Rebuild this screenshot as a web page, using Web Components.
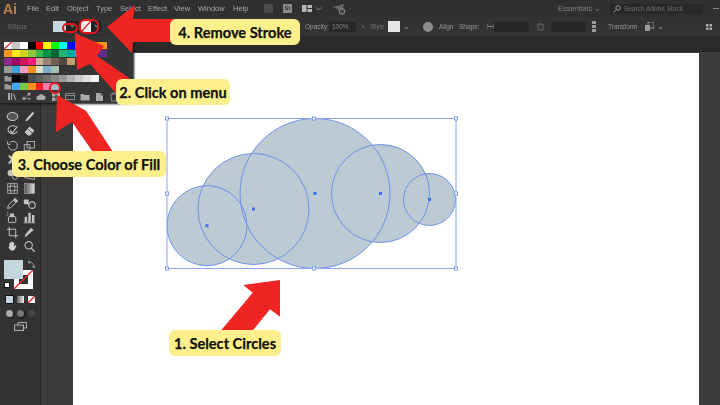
<!DOCTYPE html>
<html lang="en">
<head>
<meta charset="utf-8">
<title>Illustrator tutorial</title>
<style>
  html, body { margin: 0; height: 100%; background: #3a3a3a; overflow: hidden; }
</style>
</head>
<body>
<ai-app></ai-app>
<script>
const ICONS = {
  ellipse: '<ellipse cx="8" cy="8" rx="6.5" ry="5" fill="#555" stroke="#c4c4c4" stroke-width="1.3"/>',
  brush: '<path d="M3 14l3-1 8-9-2-2-8 9z" fill="#c4c4c4"/>',
  blob: '<path d="M12 3a6 5 0 1 0 2 6" fill="none" stroke="#c4c4c4" stroke-width="1.3"/><path d="M5 8l3 3 6-8" fill="none" stroke="#c4c4c4" stroke-width="1.4"/>',
  eraser: '<path d="M2 10l6-7 6 5-5 6H6z" fill="#c4c4c4"/><path d="M6 6l5 5" stroke="#444"/>',
  rotate: '<path d="M3 9a5.500 5.500 0 1 0 2-5M2 3v3.500h3.500" fill="none" stroke="#c4c4c4" stroke-width="1.2"/>',
  scale: '<rect x="1.500" y="7" width="7" height="7" fill="none" stroke="#c4c4c4"/><rect x="5" y="3" width="9" height="8" fill="none" stroke="#c4c4c4"/>',
  width: '<path d="M2 3l4 5-4 5h4l2-3 2 3h4l-4-5 4-5h-4L8 6 6 3z" fill="#c4c4c4"/>',
  free: '<rect x="3" y="3" width="10" height="10" fill="none" stroke="#c4c4c4" stroke-dasharray="2 1"/>',
  shape: '<circle cx="6" cy="6" r="4" fill="#c4c4c4"/><circle cx="11" cy="11" r="3" fill="none" stroke="#c4c4c4"/>',
  persp: '<path d="M2 4l12-2v12L2 12z" fill="none" stroke="#c4c4c4"/>',
  mesh: '<path d="M2 2h12v12H2zM2 6q6-2 12 0M2 10q6 2 12 0M6 2q-2 6 0 12M10 2q2 6 0 12" fill="none" stroke="#c4c4c4" stroke-width=".9"/>',
  gradient: '<rect x="2" y="2" width="12" height="12" fill="url(#g)" stroke="#c4c4c4" stroke-width=".6"/><linearGradient id="g"><stop stop-color="#555"/><stop offset="1" stop-color="#ddd"/></linearGradient>',
  dropper: '<path d="M2 14l1-4 6-6 3 3-6 6z" fill="none" stroke="#c4c4c4" stroke-width="1.2"/><path d="M9 3l2-2 4 4-2 2z" fill="#c4c4c4"/>',
  blend: '<rect x="1" y="3" width="6" height="6" rx="1" fill="#c4c4c4"/><circle cx="11" cy="10" r="4" fill="none" stroke="#c4c4c4" stroke-width="1.3"/><path d="M6 8l3 2" stroke="#c4c4c4"/>',
  spray: '<rect x="3" y="7" width="9" height="7" rx="1" fill="none" stroke="#c4c4c4" stroke-width="1.2"/><rect x="5" y="3" width="5" height="4" fill="#c4c4c4"/><path d="M1 2h2M1 5h2" stroke="#c4c4c4"/>',
  graph: '<path d="M2 14V7h3v7zM6.500 14V2h3v12zM11 14V5h3v9z" fill="#c4c4c4"/><path d="M1 14.500h14" stroke="#c4c4c4"/>',
  artboard: '<path d="M4 1v11h11M1 4h11v11" fill="none" stroke="#c4c4c4" stroke-width="1.200"/>',
  slice: '<path d="M2 14l1-4 7-8 3 3-8 7z" fill="#c4c4c4"/>',
  hand: '<path d="M4 8V4h1.500v3V2.500H7V7 2H8.500v5-4H10v5l1.500-2 1.500 1-3 6H6L3 9.500z" fill="#d0d0d0"/>',
  zoom: '<circle cx="7" cy="6.500" r="4.500" fill="none" stroke="#c4c4c4" stroke-width="1.300"/><path d="M10 10l4.500 4.500" stroke="#c4c4c4" stroke-width="1.500"/>'
};

// footer buttons of the swatches panel
const FOOT = [
  '<path d="M1 1v7h2V1zM4 1v7h1V1zM6 2l2 6 1-.5-2-6z" fill="#aaa"/>',
  '<circle cx="2" cy="6.500" r="1.500" fill="#aaa"/><circle cx="7" cy="2" r="1.500" fill="#aaa"/><circle cx="7.500" cy="7" r="1" fill="#aaa"/><path d="M2 6.500L7 2M2 6.500h5" stroke="#aaa" stroke-width=".6"/>',
  '<path d="M2.500 8a2 2 0 0 1-.3-4A3 3 0 0 1 7.500 3.500 2.300 2.300 0 0 1 8 8z" fill="#aaa"/>',
  '<path d="M1 1h3.500v3.500H1zM5.500 1H9v3.500H5.500zM1 5.500h3.500V9H1zM5.500 5.500H9V9H5.500z" fill="#aaa"/>',
  '<path d="M.5 1.500h9v6h-9zM.5 3.500h9" fill="none" stroke="#888"/>',
  '<path d="M.5 2h3l1 1h5v5.500h-9z" fill="#aaa"/>',
  '<path d="M2 1h5l2 2v6H2z" fill="#aaa"/><path d="M7 1v2h2" fill="none" stroke="#444"/>',
  '<path d="M1 2h8M3.500 2V1h3v1M2 3l.6 6h4.800L8 3" fill="none" stroke="#888"/>'
];

class AiMenubar extends HTMLElement {
  constructor() {
    super();
    this.attachShadow({ mode: 'open' });
  }

  connectedCallback() {
    const items = [['File', 19], ['Edit', 21], ['Object', 29], ['Type', 24], ['Select', 28], ['Effect', 26], ['View', 24], ['Window', 35], ['Help', 25]];
    this.shadowRoot.innerHTML = `
      <style>
        :host { display: flex; align-items: center; height: 17px; background: #303030; color: #a6a6a6; font: 7.500px "Liberation Sans", sans-serif; filter: blur(.35px); }
        .logo { width: 27px; padding-left: 3px; box-sizing: border-box; color: #c0824a; font: 700 14px "Liberation Sans", sans-serif; }
        nav { display: flex; width: 237px; }
        .icons { display: flex; align-items: center; gap: 10px; width: 294px; }
        .box { width: 9px; height: 9px; background: #4a4a4a; }
        .st { background: #8b8b8b; color: #333; font: 700 5.500px "Liberation Sans", sans-serif; text-align: center; line-height: 9px; }
        .ess { width: 52px; color: #808080; }
        .search { display: flex; align-items: center; gap: 3px; width: 93px; height: 10px; background: #282828; color: #707070; font-size: 6.500px; padding-left: 3px; box-sizing: border-box; }
        .dash { width: 6px; height: 1px; margin-left: 10px; background: #888; }
        svg { display: block; }
      </style>
      <span class="logo">Ai</span>
      <nav>${items.map(i => `<span style="width:${i[1]}px">${i[0]}</span>`).join('')}</nav>
      <div class="icons">
        <span class="box"></span><span class="box st">St</span>
        <svg width="20" height="8" viewBox="0 0 20 8"><path d="M0 0h4.500v7H0zM5.500 0H10v3H5.500zM5.500 4H10v3H5.500z" fill="#b5b5b5"/><path d="M14 2.500l2.500 2.500L19 2.500" fill="none" stroke="#999"/></svg>
        <svg width="13" height="12" viewBox="0 0 13 12" style="margin-left:1px"><path d="M0 4l11-3-2 8z" fill="#666"/><circle cx="9" cy="8.500" r="2.800" fill="#444" stroke="#999"/></svg>
      </div>
      <span class="ess">Essentials ⌄</span>
      <span class="search">
        <svg width="8" height="8" viewBox="0 0 8 8"><circle cx="5" cy="3" r="2.200" fill="none" stroke="#999"/><path d="M3.500 4.500L.5 7.500" stroke="#999"/></svg>
        Search Adobe Stock
      </span>
      <span class="dash"></span>
    `;
  }
}

class AiControlbar extends HTMLElement {
  constructor() {
    super();
    this.attachShadow({ mode: 'open' });
  }

  connectedCallback() {
    this.shadowRoot.innerHTML = `
      <style>
        :host { display: flex; align-items: center; height: 19px; background: #333; color: #969696; font: 6.500px "Liberation Sans", sans-serif; filter: blur(.3px); }
        .name { width: 53px; padding-left: 8px; box-sizing: border-box; color: #6a6a6a; }
        .fill { width: 13px; height: 11px; background: #c8d6de; }
        .drop { width: 13px; height: 11px; background: #222; color: #bbb; text-align: center; line-height: 8px; font-size: 8px; }
        .stroke { width: 10px; height: 11px; margin-left: 2px; background: #f2f2f2; }
        .gap { flex: none; }
        .input { height: 10px; background: #272727; color: #888; line-height: 10px; padding-left: 3px; box-sizing: border-box; }
        .swatch { width: 12px; height: 11px; background: #e6e6e6; }
        .globe { width: 10px; height: 10px; border-radius: 50%; background: #8d8d8d; }
        .chev { box-sizing: border-box; font-size: 8px; }
        svg { display: block; flex: none; }
      </style>
      <span class="name">Ellipse</span>
      <span class="fill"></span><span class="drop">⌄</span>
      <span class="stroke"><svg width="10" height="11" viewBox="0 0 10 11"><path d="M0 11L10 0" stroke="#e8262a" stroke-width="1.500"/></svg></span><span class="drop" style="width:10px">⌄</span>
      <span class="gap" style="width:204px"></span>
      <span style="width:24px">Opacity:</span>
      <span class="input" style="width:27px">100%</span>
      <span style="width:14px;text-align:center">›</span>
      <span style="width:18px;color:#707070">Style:</span>
      <span class="swatch"></span><span class="chev" style="width:23px;padding-left:3px">⌄</span>
      <span class="globe"></span>
      <span class="gap" style="width:6px"></span>
      <span style="width:20px">Align</span>
      <span style="width:28px">Shape:</span>
      <svg width="7" height="5" viewBox="0 0 7 5" style="margin-right:0"><path d="M0 0v5M7 0v5M1 2.500h5" stroke="#888"/></svg>
      <span class="input" style="width:35px"></span>
      <svg width="7" height="8" viewBox="0 0 7 8" style="margin:0 7.500px"><path d="M1 1h5v6H1z" fill="none" stroke="#666"/></svg>
      <span class="input" style="width:35px"></span>
      <svg width="4" height="11" viewBox="0 0 4 11" style="margin:0 12px 0 6px"><path d="M0 0h4v3H0zM0 4h4v3H0zM0 8h4v3H0z" fill="#999"/></svg>
      <span style="width:37px">Transform</span>
      <svg width="9" height="9" viewBox="0 0 9 9"><path d="M3 0h6v6H3z" fill="none" stroke="#999"/><path d="M0 3h5v6H0z" fill="#999"/></svg>
      <span class="chev" style="width:52px;padding-left:3px">⌄</span>
      <svg width="6" height="6" viewBox="0 0 6 6"><path d="M0 0h2.500v2.500H0zM3.500 0H6v2.500H3.500zM0 3.500h2.500V6H0zM3.500 3.500H6V6H3.500z" fill="#aaa"/></svg>
    `;
  }
}

class AiToolbar extends HTMLElement {
  constructor() {
    super();
    this.attachShadow({ mode: 'open' });
  }

  connectedCallback() {
    const rows = [
      ['ellipse', 'brush'], ['blob', 'eraser'], ['rotate', 'scale'], ['width', 'free'],
      ['shape', 'persp'], ['mesh', 'gradient'], ['dropper', 'blend'], ['spray', 'graph'],
      ['artboard', 'slice'], ['hand', 'zoom']
    ];
    const tools = rows.flat().map(n =>
      `<svg width="13" height="13" viewBox="0 0 16 16">${ICONS[n]}</svg>`).join('');
    this.shadowRoot.innerHTML = `
      <style>
        :host { display: flex; flex-direction: column; align-items: stretch; width: 41px; box-sizing: border-box; padding-top: 57.500px; background: #333; border-right: 1px solid #242424; filter: blur(.3px); }
        .tools { display: grid; grid-template-columns: 13px 13px; grid-auto-rows: 13px; justify-content: center; column-gap: 4px; row-gap: 1.500px; padding-left: 1px; }
        .colors { position: relative; height: 32px; margin-top: 7px; }
        .fill { position: absolute; left: 4px; top: 0; width: 19px; height: 19px; background: #c5d6df; z-index: 1; }
        .stroke { position: absolute; left: 14px; top: 10px; }
        .swap { position: absolute; left: 27px; top: 1px; }
        .mini { position: absolute; left: 4px; top: 22px; width: 4px; height: 4px; background: #fff; border: 1px solid #111; }
        .row { display: flex; justify-content: center; gap: 4px; }
        .mode { width: 7px; height: 7px; }
        .dm { width: 7px; height: 7px; border-radius: 50%; background: #aaa; box-shadow: 1px 1px 0 1px #222; }
        svg { display: block; }
      </style>
      <div class="tools">${tools}</div>
      <div class="colors">
        <div class="fill"></div>
        <svg class="stroke" width="19" height="19" viewBox="0 0 19 19"><path fill-rule="evenodd" d="M0 0h19v19H0zM5 5v9h9V5z" fill="#fff"/><path d="M0 19L19 0" stroke="#e8262a" stroke-width="1.300"/></svg>
        <svg class="swap" width="8" height="8" viewBox="0 0 8 8"><path d="M1 1h3l3 3v3M5 5l2 2 1-2M3 0L1 1l2 2" fill="none" stroke="#999"/></svg>
        <div class="mini"></div>
      </div>
      <div class="row" style="margin-top:3.500px">
        <span class="mode" style="background:#c5d6df;outline:1px solid #111"></span>
        <span class="mode" style="background:linear-gradient(90deg,#666,#eee)"></span>
        <svg class="mode" viewBox="0 0 7 7"><path d="M0 0h7v7H0z" fill="#fff"/><path d="M0 7L7 0" stroke="#e8262a" stroke-width="1.500"/></svg>
      </div>
      <div class="row" style="margin-top:7px">
        <span class="dm"></span><span class="dm" style="background:#777"></span><span class="dm" style="background:#444;box-shadow:none"></span>
      </div>
      <div class="row" style="margin-top:5px">
        <svg width="13" height="9" viewBox="0 0 13 9"><path d="M4 3V.5h8.500v5.500H9.500" fill="none" stroke="#aaa"/><rect x=".5" y="3" width="9" height="5.500" fill="#3a3a3a" stroke="#aaa"/></svg>
      </div>
    `;
  }
}

class AiSwatches extends HTMLElement {
  constructor() {
    super();
    this.attachShadow({ mode: 'open' });
  }

  connectedCallback() {
    const rows = [
      ['none', '#c4c4c4', '#fff', '#000', '#f00', '#ff0', '#0f0', '#0ff', '#00f', '#f0f', '#e33', '#e80', '#f7931e', ''],
      ['#f7931e', '#ffe81f', '#cfd31f', '#8cc63f', '#39b54a', '#009245', '#006837', '#22b573', '#00a99d', '#29abe2', '#0071bc', '#2e3192', '#662d91', ''],
      ['#93278f', '#9e005d', '#d4145a', '#ed1e79', '#c7b299', '#998675', '#736357', '#534741', '#c69c6d', '', '', '', '', ''],
      ['#999', '#3fa0dc', '#f49ac1', '#f7941d', '#d9e4c8', '#7fa9c9', '#a3c0b0', '', '', '', '', '', '', '']
    ];
    const cell = c => c === 'none'
      ? '<svg width="8" height="7" viewBox="0 0 8 7"><rect width="8" height="7" fill="#fff"/><path d="M0 7L8 0" stroke="#e8262a" stroke-width="1.300"/></svg>'
      : `<i style="background:${c || 'transparent'}"></i>`;
    const grays = ['#000', '#1c1c1c', '#4d4d4d', '#5e5e5e', '#707070', '#858585', '#999', '#b3b3b3', '#ccc', '#e0e0e0', '#f5f5f5'];
    const brights = ['#3fa9f5', '#7ac943', '#f7931e', '#ff1d25', '#ff7bac', '#a9b8c2'];
    const folder = '<svg width="8" height="7" viewBox="0 0 8 7"><path d="M.5 1h3l1 1h3v4.500H.5z" fill="#999"/></svg>';
    this.shadowRoot.innerHTML = `
      <style>
        :host { position: absolute; left: 0; top: 36px; z-index: 2; width: 133px; height: 67px; box-sizing: border-box; padding: 6px 0 0 4px; background: #353535; box-shadow: 1px 1px 2px #111; filter: blur(.3px); }
        .grid { display: flex; flex-direction: column; gap: 1px; }
        .row { display: flex; }
        .row > * { display: block; flex: none; width: 7.900px; height: 7px; }
        .row.spaced { margin-top: 1px; }
        .foot { display: flex; gap: 4.500px; margin-top: 2px; padding-left: 3px; }
        .foot svg { display: block; width: 10px; height: 10px; }
      </style>
      <div class="grid">
        ${rows.map(r => `<div class="row">${r.map(cell).join('')}</div>`).join('')}
        <div class="row spaced">${folder}${grays.map(cell).join('')}</div>
        <div class="row">${folder}${brights.map(cell).join('')}</div>
      </div>
      <div class="foot">${FOOT.map(p => `<svg viewBox="0 0 10 10">${p}</svg>`).join('')}</div>
    `;
  }
}

class AiArtboard extends HTMLElement {
  constructor() {
    super();
    this.attachShadow({ mode: 'open' });
  }

  connectedCallback() {
    const circles = [[315, 193.5, 75], [253.5, 209, 55.500], [207, 225.700, 40], [380.500, 193.500, 49], [429.500, 199.500, 26]];
    const handles = [[167, 118.500], [314, 118.500], [456, 118.500], [167, 193.500], [456, 193.500], [167, 268.500], [314, 268.500], [456, 268.500]];
    this.shadowRoot.innerHTML = `
      <style>
        :host { display: block; flex: 1; background: #fff; }
        svg { display: block; width: 100%; height: 100%; }
      </style>
      <svg viewBox="73 53 626 352">
        ${circles.map(c => `<circle cx="${c[0]}" cy="${c[1]}" r="${c[2]}" fill="#bccad3"/>`).join('')}
        <g fill="none" stroke="#6f93e6">
          ${circles.map(c => `<circle cx="${c[0]}" cy="${c[1]}" r="${c[2]}"/>`).join('')}
          <rect x="167" y="118.500" width="289" height="150" stroke="#8aa6ec"/>
        </g>
        ${handles.map(h => `<rect x="${h[0] - 1.5}" y="${h[1] - 1.5}" width="3" height="3" fill="#fff" stroke="#7f9fea"/>`).join('')}
        ${circles.map(c => `<rect x="${c[0] - 1.500}" y="${c[1] - 1.500}" width="3" height="3" fill="#3f6ff0"/>`).join('')}
      </svg>
    `;
  }
}

class CallOut extends HTMLElement {
  constructor() {
    super();
    this.attachShadow({ mode: 'open' });
  }

  connectedCallback() {
    this.shadowRoot.innerHTML = `
      <style>
        :host { position: absolute; z-index: 4; display: flex; align-items: center; justify-content: center; height: 26px; border-radius: 6px; background: #fdf08c; color: #121212; font: 700 14.600px Lato, sans-serif; -webkit-text-stroke: .25px #121212; white-space: nowrap; }
      </style>
      <slot></slot>
    `;
  }
}

class AiApp extends HTMLElement {
  constructor() {
    super();
    this.attachShadow({ mode: 'open' });
  }

  connectedCallback() {
    this.shadowRoot.innerHTML = `
      <style>
        :host { display: flex; flex-direction: column; position: relative; width: 720px; height: 405px; overflow: hidden; background: #3a3a3a; }
        .tabs { height: 16px; background: #2a2a2a; border-bottom: 1px solid #242424; box-sizing: border-box; }
        .work { flex: 1; display: flex; min-height: 0; }
        .canvas { flex: 1; display: flex; padding: 1px 21px 0 32px; background: #3b3b3b; }
        .marks { position: absolute; inset: 0; z-index: 3; pointer-events: none; }
        .ring { position: absolute; z-index: 3; box-sizing: border-box; border: 2px solid #e8141c; }
        call-out[n="1"] { left: 169px; top: 330px; width: 112px; }
        call-out[n="2"] { left: 116px; top: 79px; width: 114px; }
        call-out[n="3"] { left: 12px; top: 151px; width: 154px; }
        call-out[n="4"] { left: 170px; top: 19px; width: 130px; }
      </style>
      <ai-menubar></ai-menubar>
      <ai-controlbar></ai-controlbar>
      <div class="tabs"></div>
      <div class="work">
        <ai-toolbar></ai-toolbar>
        <div class="canvas"><ai-artboard></ai-artboard></div>
      </div>
      <ai-swatches></ai-swatches>
      <svg class="marks" viewBox="0 0 720 405" fill="#ef2523">
        <path d="M280 280L243.300 285L252.700 292.700L218 334H250L270 309.300L280 316.700Z"/>
        <path d="M57 95L86 110.700L115 155H95L72 122L56 132Z"/>
        <path d="M75 33L104 46L97 56L135 82L122 100L90 64L77 70Z"/>
        <path d="M107 27L135 5L133 19H175V42H133L132 53Z"/>
      </svg>
      <span class="ring" style="left:62px;top:23px;width:15.500px;height:10px;border-radius:5px"></span>
      <span class="ring" style="left:79px;top:19px;width:20px;height:15px;border-radius:6px"></span>
      <span class="ring" style="left:49px;top:82px;width:12px;height:12px;border-radius:50%"></span>
      <call-out n="1">1. Select Circles</call-out>
      <call-out n="2">2. Click on menu</call-out>
      <call-out n="3">3. Choose Color of Fill</call-out>
      <call-out n="4">4. Remove Stroke</call-out>
    `;
  }
}

customElements.define('ai-menubar', AiMenubar);
customElements.define('ai-controlbar', AiControlbar);
customElements.define('ai-toolbar', AiToolbar);
customElements.define('ai-swatches', AiSwatches);
customElements.define('ai-artboard', AiArtboard);
customElements.define('call-out', CallOut);
customElements.define('ai-app', AiApp);
</script>
</body>
</html>
